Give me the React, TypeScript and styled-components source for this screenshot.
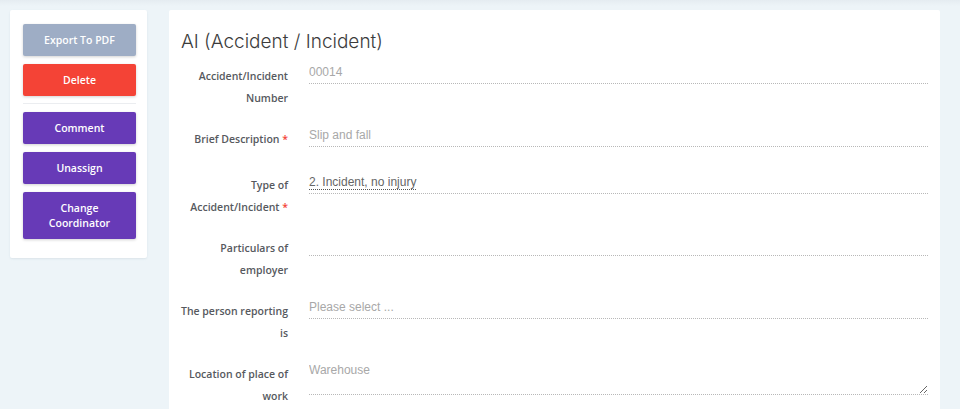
import styled, { createGlobalStyle } from "styled-components";

const GlobalStyle = createGlobalStyle`
  html, body {
    margin: 0;
    padding: 0;
    background-color: #edf4f8;
  }
  * {
    box-sizing: border-box;
  }
`;

type Field = {
    label: string[];
    required?: boolean;
    kind: "input" | "select" | "textarea";
    value?: string;
    placeholder?: string;
};

const fields: Field[] = [
    { label: ["Accident/Incident", "Number"], kind: "input", value: "00014" },
    { label: ["Brief Description"], required: true, kind: "input", placeholder: "Slip and fall" },
    { label: ["Type of", "Accident/Incident"], required: true, kind: "select", value: "2. Incident, no injury" },
    { label: ["Particulars of", "employer"], kind: "input" },
    { label: ["The person reporting", "is"], kind: "input", placeholder: "Please select ..." },
    { label: ["Location of place of", "work"], kind: "textarea", placeholder: "Warehouse" },
];

function App() {
    return (
        <>
            <GlobalStyle />
            <Page>
                <SideCard>
                    <ActionButton $color="#9eadc5">Export To PDF</ActionButton>
                    <ActionButton $color="#f44336">Delete</ActionButton>
                    <Separator />
                    <ActionButton $color="#673ab7">Comment</ActionButton>
                    <ActionButton $color="#673ab7">Unassign</ActionButton>
                    <ActionButton $color="#673ab7" $tall>
                        Change<br />Coordinator
                    </ActionButton>
                </SideCard>

                <MainCard>
                    <Title>AI (Accident / Incident)</Title>
                    {fields.map((f) => (
                        <FormRow key={f.label.join(" ")}>
                            <Label>
                                {f.label.map((line, i) => (
                                    <span key={i}>
                                        {line}
                                        {f.required && i === f.label.length - 1 && <Required> *</Required>}
                                    </span>
                                ))}
                            </Label>
                            {f.kind === "input" && (
                                <TextInput
                                    readOnly
                                    defaultValue={f.value}
                                    placeholder={f.placeholder}
                                />
                            )}
                            {f.kind === "select" && (
                                <SelectBox>
                                    <SelectText>{f.value}</SelectText>
                                </SelectBox>
                            )}
                            {f.kind === "textarea" && (
                                <TextArea readOnly placeholder={f.placeholder} />
                            )}
                        </FormRow>
                    ))}
                </MainCard>
            </Page>
        </>
    );
}

export default App;

const Page = styled.div`
    display: flex;
    align-items: flex-start;
    gap: 22px;
    padding: 10px 20px 0 10px;
    height: 409px;
    overflow: hidden;
    background: linear-gradient(#e5ecf1, #edf4f8 6px);
    font-family: "Open Sans", "Liberation Sans", sans-serif;
`;

const SideCard = styled.div`
    width: 137px;
    flex-shrink: 0;
    padding: 14px 11px 19px 13px;
    background-color: #ffffff;
    border-radius: 2px;
    box-shadow: 0 1px 2px rgba(120, 140, 160, 0.15);
    display: flex;
    flex-direction: column;
    gap: 8px;
`;

const ActionButton = styled.button<{ $color: string; $tall?: boolean }>`
    width: 100%;
    height: ${(p) => (p.$tall ? "47px" : "32px")};
    border: none;
    border-radius: 2px;
    background-color: ${(p) => p.$color};
    color: #ffffff;
    font-family: "Open Sans", sans-serif;
    font-weight: 600;
    font-size: 10.5px;
    line-height: 15px;
    box-shadow: 0 1px 3px rgba(0, 0, 0, 0.18);
    cursor: pointer;
    padding: 0;
`;

const Separator = styled.hr`
    margin: -1px 0 0 0;
    border: none;
    border-top: 1px solid #ebedf0;
`;

const MainCard = styled.div`
    flex: 1;
    min-height: 420px;
    padding: 19px 12px 0 12px;
    background-color: #ffffff;
    border-radius: 2px;
`;

const Title = styled.div`
    font-family: "Inter", "Open Sans", sans-serif;
    font-weight: 300;
    font-size: 19px;
    line-height: 26px;
    color: #3c3c3c;
    margin-bottom: 8px;
`;

const FormRow = styled.div`
    display: grid;
    grid-template-columns: 107px 1fr;
    column-gap: 21px;
    align-items: start;
    min-height: 29px;
    margin-bottom: 17px;
`;

const Label = styled.div`
    padding-top: 2px;
    display: flex;
    flex-direction: column;
    align-items: flex-end;
    text-align: right;
    font-family: "Open Sans", sans-serif;
    font-weight: 600;
    font-size: 10.5px;
    line-height: 22px;
    color: #56595e;
    white-space: nowrap;
`;

const Required = styled.span`
    color: #f44336;
`;

const TextInput = styled.input`
    width: 100%;
    height: 21px;
    padding: 1px 0 3px 0;
    border: none;
    border-bottom: 1px dotted #b8b8b8;
    outline: none;
    background: transparent;
    font-family: "Liberation Sans", Arial, sans-serif;
    font-size: 12px;
    line-height: 16px;
    color: #a8a8a8;

    &::placeholder {
        color: #a8a8a8;
    }
`;

const SelectBox = styled.div`
    width: 100%;
    height: 22px;
    padding: 2px 0 0 0;
    border-bottom: 1px dotted #b8b8b8;
    font-family: "Liberation Sans", Arial, sans-serif;
    font-size: 12px;
    line-height: 16px;
`;

const SelectText = styled.span`
    color: #666666;
    border-bottom: 1px dotted #555555;
`;

const TextArea = styled.textarea`
    width: 100%;
    height: 34px;
    padding: 1px 0 0 0;
    border: none;
    border-bottom: 1px dotted #b8b8b8;
    outline: none;
    background: transparent;
    font-family: "Liberation Sans", Arial, sans-serif;
    font-size: 12px;
    line-height: 16px;
    color: #a8a8a8;
    resize: vertical;

    &::placeholder {
        color: #a8a8a8;
    }
`;
